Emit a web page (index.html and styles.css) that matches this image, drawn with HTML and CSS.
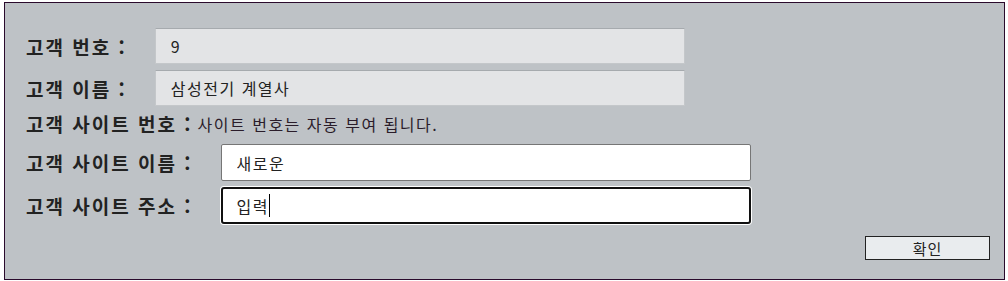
FILE: index.html
```html
<!DOCTYPE html>
<html lang="ko">
<head>
<meta charset="utf-8">
<link rel="stylesheet" href="styles.css">
</head>
<body>
<div class="panel">
  <div class="row">
    <label class="lbl">고객 번호 :</label>
    <input class="field readonly" type="text" value="9" readonly>
  </div>
  <div class="row">
    <label class="lbl">고객 이름 :</label>
    <input class="field readonly" type="text" value="삼성전기 계열사" readonly>
  </div>
  <div class="row info">
    <label class="lbl">고객 사이트 번호 :</label>
    <span class="note">사이트 번호는 자동 부여 됩니다.</span>
  </div>
  <div class="row">
    <label class="lbl">고객 사이트 이름 :</label>
    <input class="field" type="text" value="새로운">
  </div>
  <div class="row">
    <label class="lbl">고객 사이트 주소 :</label>
    <div class="field focused"><span>입력</span><span class="caret"></span></div>
  </div>
  <div class="actions">
    <button class="btn" type="button">확인</button>
  </div>
</div>
</body>
</html>
```
FILE: styles.css
```css
html, body {
  margin: 0;
  padding: 0;
  background: #ffffff;
}
body {
  font-family: "Noto Sans CJK KR", "Noto Sans", sans-serif;
  color: #222;
}
.panel {
  box-sizing: border-box;
  margin: 2px 4px;
  width: 1001px;
  height: 278px;
  border: 1px solid #2a0a2c;
  background: #bec2c6;
  padding: 25px 14px 0 21px;
  display: flex;
  flex-direction: column;
}
.row {
  display: flex;
  align-items: center;
  gap: 28px;
  margin-bottom: 6px;
}
.lbl {
  font-size: 19px;
  font-weight: bold;
  letter-spacing: 2px;
  color: #222;
  white-space: nowrap;
}
.field {
  box-sizing: border-box;
  width: 530px;
  height: 37px;
  padding: 0 15px;
  font-family: inherit;
  font-size: 16px;
  letter-spacing: 1.5px;
  color: #222;
  background: #fff;
  border: 1px solid #767676;
  border-radius: 2px;
  outline: none;
  display: flex;
  align-items: center;
}
.readonly {
  height: 36px;
  background: #e3e4e6;
  border: 1px solid #c4c7ca;
  border-top-color: #a6aaae;
  border-radius: 0;
}
.focused {
  height: 37px;
  border: 2px solid #101010;
  border-radius: 3px;
  box-shadow: 0 0 0 1px #fff;
  padding-left: 14px;
}
.caret {
  display: inline-block;
  width: 1px;
  height: 23px;
  background: #000;
  margin-left: 0;
}
.info {
  gap: 5px;
  margin-top: -2px;
  margin-bottom: 7px;
}
.note {
  font-size: 16px;
  letter-spacing: 1.5px;
  color: #2a1c2a;
}
.actions {
  display: flex;
  justify-content: flex-end;
  margin-top: 6px;
}
.btn {
  width: 125px;
  height: 24px;
  margin: 0;
  padding: 0;
  font-family: inherit;
  font-size: 15px;
  letter-spacing: 1px;
  color: #222;
  background: #e9ecee;
  border: 1px solid #222;
  border-radius: 0;
}
```
